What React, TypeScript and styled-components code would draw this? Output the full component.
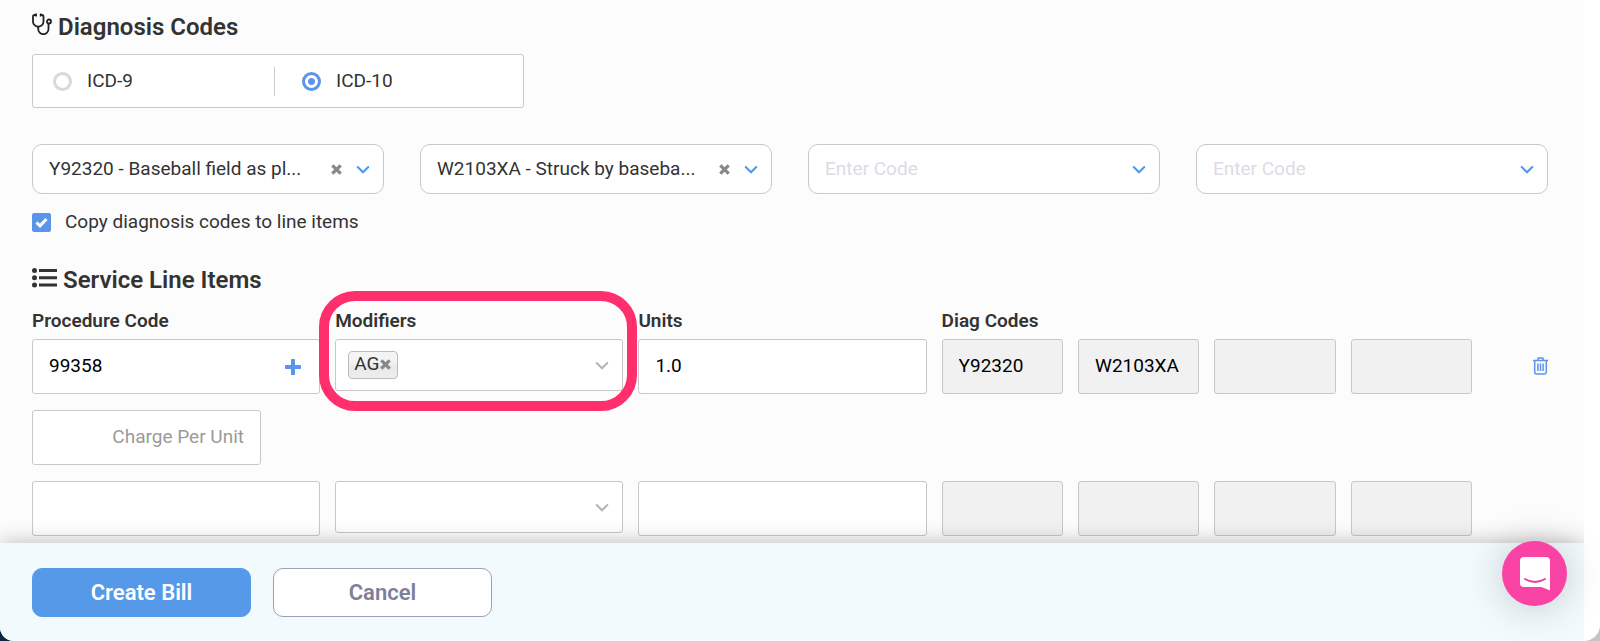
import React, { useState } from "react";
import styled, { createGlobalStyle, css } from "styled-components";

const GlobalStyle = createGlobalStyle`
  *, *::before, *::after { box-sizing: border-box; }
  html { background: linear-gradient(90deg, #0b2545 50%, #c4c4c4 50%); }
  body {
    margin: 0;
    color: #333;
    font: 400 19px/24px Roboto, "Open Sans", sans-serif;
  }
  button, input, select { font: inherit; color: inherit; }
`;

const Shell = styled.div`
  display: flex;
  flex-direction: column;
  height: 100vh;
  padding-right: 16px;
  overflow: hidden;
  position: relative;
  background: #fff;
  border-radius: 0 0 16px 14px;
`;

const Main = styled.main`
  flex: 1;
  min-height: 0;
  overflow: hidden;
  padding: 11px 36px 0 32px;
  background: #fcfcfc;
`;

const Heading = styled.h2`
  display: flex;
  align-items: baseline;
  gap: 6px;
  height: 32px;
  margin: 0;
  font-size: 24px;
  line-height: 32px;
  font-weight: 600;

  svg { flex: none; }
`;

const RadioGroup = styled.div`
  display: flex;
  align-items: center;
  width: 492px;
  height: 54px;
  margin: 11px 0 36px;
  background: #fff;
  border: 1px solid #c8c8c8;
  border-radius: 3px;
`;

const RadioLabel = styled.label`
  display: flex;
  flex: 1;
  align-items: center;
  gap: 15px;
  height: 29px;
  padding-left: 20px;

  & + & {
    border-left: 1px solid #ccc;
    padding-left: 27px;
  }
`;

const Radio = styled.input`
  appearance: none;
  width: 19px;
  height: 19px;
  margin: 0;
  border: 3px solid #d9d9d9;
  border-radius: 50%;
  background: #fff;

  &:checked {
    border-color: #5b94ea;
    background: radial-gradient(circle, #5b94ea 3px, #fff 4px);
  }
`;

const CodeGrid = styled.div`
  display: grid;
  grid-template-columns: repeat(4, 1fr);
  gap: 36px;
`;

const frame = css`
  background: #fff;
  border: 1px solid #c8c8c8;
  border-radius: 3px;
`;

const SelectBox = styled.div<{ $rounded?: boolean }>`
  ${frame}
  display: flex;
  align-items: center;
  min-width: 0;
  height: ${(p) => (p.$rounded ? 50 : 52)}px;
  padding: ${(p) => (p.$rounded ? "0 13px 0 16px" : "0 13px 0 12px")};
  border-radius: ${(p) => (p.$rounded ? 10 : 3)}px;

  > svg { flex: none; pointer-events: none; }
`;

const Select = styled.select<{ $empty?: boolean }>`
  appearance: none;
  flex: 1;
  min-width: 0;
  height: 100%;
  padding: 0 0 1px;
  border: 0;
  outline: 0;
  background: transparent;
  text-overflow: ellipsis;
  color: ${(p) => (p.$empty ? "#dcdce4" : "#333")};
`;

const IconButton = styled.button`
  display: flex;
  align-items: center;
  justify-content: center;
  padding: 0;
  border: 0;
  background: none;
  cursor: pointer;
`;

const ClearButton = styled(IconButton)`
  width: 12px;
  margin-right: 14px;
`;

const CheckLabel = styled.label`
  display: flex;
  align-items: center;
  gap: 14px;
  margin: 16px 0 30px;
`;

const CheckFrame = styled.span`
  display: grid;
  place-items: center;
  width: 19px;
  height: 19px;
  margin-top: 1px;

  > * { grid-area: 1 / 1; }
  > svg { pointer-events: none; }
`;

const Checkbox = styled.input`
  appearance: none;
  width: 19px;
  height: 19px;
  margin: 0;
  border: 1px solid #5b94ea;
  border-radius: 2px;

  &:checked { background: #5b94ea; }
`;

const LineGrid = styled.div`
  display: grid;
  grid-template-columns: repeat(3, 20fr) repeat(4, 9fr) 4fr;
  align-items: start;
  margin-bottom: 16px;
`;

const Cell = styled.div<{ $span?: number }>`
  grid-column: span ${(p) => p.$span ?? 1};
  min-width: 0;
  padding-right: 15px;
`;

const ColumnLabel = styled.label`
  display: block;
  margin: 13px 0 6px;
  font-weight: 600;
`;

const InputBox = styled.div`
  ${frame}
  display: flex;
  align-items: center;
  height: 55px;
  padding-right: 18px;
`;

const TextInput = styled.input`
  width: 100%;
  min-width: 0;
  height: 100%;
  padding: 0 16px 2px;
  border: 0;
  outline: 0;
  background: transparent;
  color: #000;
`;

const ChargeInput = styled.input`
  ${frame}
  display: block;
  width: 229px;
  height: 55px;
  margin-bottom: 16px;
  padding: 0 16px 2px;
  text-align: right;

  &::placeholder { color: #9a9a9a; opacity: 1; }
`;

const DiagInput = styled.input`
  ${frame}
  display: block;
  width: 100%;
  height: 55px;
  padding: 0 16px 2px;
  background: #f1f1f1;
  color: #000;
`;

const DeleteCell = styled.div`
  display: flex;
  justify-content: flex-end;
  align-items: center;
  height: 53px;
`;

const Tag = styled.span`
  display: flex;
  flex: none;
  align-items: center;
  gap: 1px;
  height: 28px;
  padding: 0 6px 2px 5px;
  border: 1px solid #bbb;
  border-radius: 4px;
  background: linear-gradient(#f4f4f4 20%, #f0f0f0 50%, #e8e8e8 52%, #eee);
`;

const ModifierCell = styled(Cell)`
  position: relative;
`;

const Highlight = styled.div`
  position: absolute;
  inset: -48px 1px -20px -16px;
  border: 10px solid #ff2e6c;
  border-radius: 36px;
  pointer-events: none;
`;

const Footer = styled.footer`
  display: flex;
  gap: 22px;
  padding: 25px 32px 24px;
  z-index: 1;
  background: #f2fafe;
  box-shadow: 0 0 20px rgba(0, 0, 0, 0.27);
  clip-path: inset(-30px 0 0 0);
`;

const ActionButton = styled.button<{ $primary?: boolean }>`
  width: 219px;
  height: 49px;
  padding: 0;
  border: 1px solid ${(p) => (p.$primary ? "#5699e8" : "#9d9fb2")};
  border-radius: 10px;
  background: ${(p) => (p.$primary ? "#5699e8" : "#fff")};
  color: ${(p) => (p.$primary ? "#fff" : "#7e8099")};
  font-size: 22px;
  font-weight: 600;
  cursor: pointer;
`;

const Launcher = styled(IconButton)`
  position: absolute;
  right: 33px;
  bottom: 35px;
  z-index: 2;
  width: 65px;
  height: 65px;
  border-radius: 50%;
  background: #f943a5;
  box-shadow: 0 2px 40px rgba(0, 0, 0, 0.2);
`;

const StethoscopeIcon = () => (
  <svg width="20" height="22" viewBox="0 0 20 22" fill="none" stroke="#222" strokeWidth="1.8">
    <path d="M4.500 2H2.500Q1 2 1 3.500V8.500a5 5 0 0 0 10.500 0V3.500Q11.500 2 10 2H8.500" />
    <path d="M6.200 13.500v2.500a5 5 0 0 0 10.300 0V10.500" />
    <circle cx="17" cy="8.500" r="2" />
    <path d="M4 .5v3M8.700 .5v3" />
  </svg>
);

const ListIcon = () => (
  <svg width="25" height="20" viewBox="0 0 25 20" fill="#333">
    <circle cx="2.500" cy="2.500" r="2.500" />
    <circle cx="2.500" cy="9.700" r="2.500" />
    <circle cx="2.500" cy="17" r="2.500" />
    <path d="M7 1h18v3H7zM7 8.200h18v3H7zM7 15.500h18v3H7z" />
  </svg>
);

const ClearIcon = () => (
  <svg width="11" height="11" viewBox="0 0 11 11" stroke="#888" strokeWidth="3.200">
    <path d="M1.300 1.300 9.700 9.700M9.700 1.300 1.300 9.700" />
  </svg>
);

const Chevron = ({ color }: { color: string }) => (
  <svg width="14" height="9" viewBox="0 0 14 9" fill="none" stroke={color} strokeWidth="2" strokeLinecap="round">
    <path d="M1.700 2 7 7.300 12.300 2" />
  </svg>
);

const PlusIcon = () => (
  <svg width="16" height="16" viewBox="0 0 16 16" fill="#5b94ea">
    <path d="M6.700 0h2.600q.7 0 .7.700V6h5.300q.7 0 .7.700v2.600q0 .7-.7.700H10v5.300q0 .7-.7.700H6.700q-.7 0-.7-.7V10H.7Q0 10 0 9.300V6.700Q0 6 .7 6H6V.7Q6 0 6.700 0z" />
  </svg>
);

const TrashIcon = () => (
  <svg width="15" height="18" viewBox="0 0 15 18" fill="none" stroke="#5b94ea" strokeWidth="1.500">
    <path d="M0 3.600h15M4.500 3.400 5.200 1h4.600l.7 2.400M1.700 3.800V15q0 2 2 2h7.600q2 0 2-2V3.800M4.900 6.500v7.500M7.500 6.500v7.500M10.100 6.500v7.500" />
  </svg>
);

const ChatIcon = () => (
  <svg width="30" height="34" viewBox="0 0 30 34">
    <path d="M4 0h22q4 0 4 4v29.500L21.500 30H4q-4 0-4-4V4q0-4 4-4z" fill="#fff" />
    <path d="M5 22q10 6 20 0" fill="none" stroke="#e63aa0" strokeWidth="1.800" strokeLinecap="round" />
  </svg>
);

function CodeSelect({ value, index }: { value?: string; index: number }) {
  return (
    <SelectBox $rounded>
      <Select $empty={!value} aria-label={`Diagnosis code ${index}`}>
        <option>{value ?? "Enter Code"}</option>
      </Select>
      {value && (
        <ClearButton type="button" aria-label="Clear code">
          <ClearIcon />
        </ClearButton>
      )}
      <Chevron color="#4c97f0" />
    </SelectBox>
  );
}

const CODES = ["Y92320 - Baseball field as pl...", "W2103XA - Struck by baseba...", undefined, undefined];

type Line = { id: string; procedure?: string; modifier?: string; units?: string; diag: string[] };

const LINES: Line[] = [
  { id: "line-1", procedure: "99358", modifier: "AG", units: "1.0", diag: ["Y92320", "W2103XA", "", ""] },
  { id: "line-2", diag: ["", "", "", ""] },
];

function LineItem({ line }: { line: Line }) {
  return (
    <LineGrid>
      <Cell>
        <InputBox>
          <TextInput id={`${line.id}-procedure`} aria-label="Procedure Code" defaultValue={line.procedure} />
          {line.procedure && (
            <IconButton type="button" aria-label="Add procedure">
              <PlusIcon />
            </IconButton>
          )}
        </InputBox>
      </Cell>
      <ModifierCell>
        <SelectBox>
          {line.modifier && (
            <Tag>
              {line.modifier}
              <IconButton type="button" aria-label="Remove modifier">
                <ClearIcon />
              </IconButton>
            </Tag>
          )}
          <Select id={`${line.id}-modifiers`} aria-label="Modifiers">
            <option />
          </Select>
          <Chevron color="#b5b5b5" />
        </SelectBox>
        {line.modifier && <Highlight />}
      </ModifierCell>
      <Cell>
        <InputBox>
          <TextInput id={`${line.id}-units`} aria-label="Units" defaultValue={line.units} />
        </InputBox>
      </Cell>
      {line.diag.map((code, i) => (
        <Cell key={i}>
          <DiagInput id={`${line.id}-diag-${i}`} aria-label={`Diag code ${i + 1}`} readOnly value={code} />
        </Cell>
      ))}
      {line.procedure && (
        <DeleteCell>
          <IconButton type="button" aria-label="Delete line">
            <TrashIcon />
          </IconButton>
        </DeleteCell>
      )}
    </LineGrid>
  );
}

const LabelRow = styled(LineGrid)`
  margin-bottom: 0;
`;

export default function App() {
  const [version, setVersion] = useState("ICD-10");
  const [copy, setCopy] = useState(true);

  return (
    <>
      <GlobalStyle />
      <Shell>
        <Main>
          <Heading>
            <StethoscopeIcon />
            Diagnosis Codes
          </Heading>
          <RadioGroup role="radiogroup" aria-label="Code version">
            {["ICD-9", "ICD-10"].map((v) => (
              <RadioLabel key={v}>
                <Radio type="radio" name="version" checked={version === v} onChange={() => setVersion(v)} />
                {v}
              </RadioLabel>
            ))}
          </RadioGroup>
          <CodeGrid>
            {CODES.map((code, i) => (
              <CodeSelect key={i} value={code} index={i + 1} />
            ))}
          </CodeGrid>
          <CheckLabel>
            <CheckFrame>
              <Checkbox type="checkbox" checked={copy} onChange={() => setCopy(!copy)} />
              {copy && (
                <svg width="13" height="11" viewBox="0 0 13 11" fill="none" stroke="#fff" strokeWidth="3">
                  <path d="M1.500 5.500 5 8.800 11.500 2" />
                </svg>
              )}
            </CheckFrame>
            Copy diagnosis codes to line items
          </CheckLabel>
          <Heading>
            <ListIcon />
            Service Line Items
          </Heading>
          <LabelRow>
            <Cell><ColumnLabel htmlFor="line-1-procedure">Procedure Code</ColumnLabel></Cell>
            <Cell><ColumnLabel htmlFor="line-1-modifiers">Modifiers</ColumnLabel></Cell>
            <Cell><ColumnLabel htmlFor="line-1-units">Units</ColumnLabel></Cell>
            <Cell $span={4}><ColumnLabel htmlFor="line-1-diag-0">Diag Codes</ColumnLabel></Cell>
          </LabelRow>
          <LineItem line={LINES[0]} />
          <ChargeInput placeholder="Charge Per Unit" aria-label="Charge Per Unit" />
          <LineItem line={LINES[1]} />
        </Main>
        <Footer>
          <ActionButton type="button" $primary>Create Bill</ActionButton>
          <ActionButton type="button">Cancel</ActionButton>
        </Footer>
        <Launcher type="button" aria-label="Open chat">
          <ChatIcon />
        </Launcher>
      </Shell>
    </>
  );
}
